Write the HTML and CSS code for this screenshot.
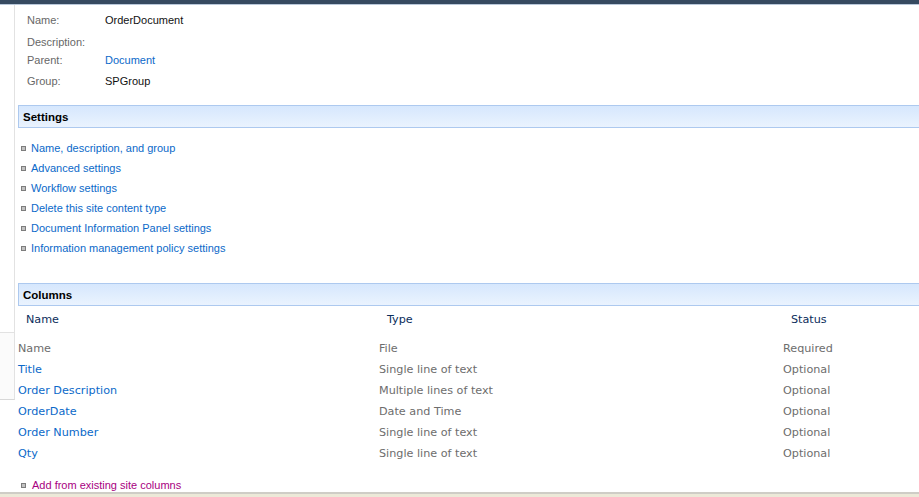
FILE: index.html
```html
<!DOCTYPE html>
<html>
<head>
<meta charset="utf-8">
<link rel="stylesheet" href="styles.css">
</head>
<body>
<div class="topbar"></div>
<div class="layout">
  <div class="leftnav">
    <div class="nav-top"></div>
    <div class="nav-bottom"></div>
  </div>
  <div class="main">
    <div class="info">
      <div class="info-row r1"><span class="lbl">Name:</span><span class="val">OrderDocument</span></div>
      <div class="info-row r2"><span class="lbl">Description:</span><span class="val"></span></div>
      <div class="info-row r3"><span class="lbl">Parent:</span><a class="val link">Document</a></div>
      <div class="info-row r4"><span class="lbl">Group:</span><span class="val">SPGroup</span></div>
    </div>

    <div class="section-head settings-head">Settings</div>
    <ul class="links">
      <li><span class="bullet"></span><a class="link">Name, description, and group</a></li>
      <li><span class="bullet"></span><a class="link">Advanced settings</a></li>
      <li><span class="bullet"></span><a class="link">Workflow settings</a></li>
      <li><span class="bullet"></span><a class="link">Delete this site content type</a></li>
      <li><span class="bullet"></span><a class="link">Document Information Panel settings</a></li>
      <li><span class="bullet"></span><a class="link">Information management policy settings</a></li>
    </ul>

    <div class="section-head columns-head">Columns</div>
    <div class="cols">
      <div class="col-row head"><span>Name</span><span>Type</span><span>Status</span></div>
      <div class="col-row first"><span class="plain">Name</span><span>File</span><span>Required</span></div>
      <div class="col-row"><a class="clink">Title</a><span>Single line of text</span><span>Optional</span></div>
      <div class="col-row"><a class="clink">Order Description</a><span>Multiple lines of text</span><span>Optional</span></div>
      <div class="col-row"><a class="clink">OrderDate</a><span>Date and Time</span><span>Optional</span></div>
      <div class="col-row"><a class="clink">Order Number</a><span>Single line of text</span><span>Optional</span></div>
      <div class="col-row"><a class="clink">Qty</a><span>Single line of text</span><span>Optional</span></div>
    </div>
    <div class="add-row"><span class="bullet"></span><a class="visited">Add from existing site columns</a></div>
  </div>
</div>
<div class="statusbar"></div>
</body>
</html>
```

FILE: styles.css
```css
html, body {
  margin: 0;
  padding: 0;
  background: #ffffff;
  overflow: hidden;
  height: 497px;
}
body {
  font-family: "Liberation Sans", Arial, sans-serif;
  font-size: 11px;
  color: #000;
}
.topbar {
  height: 4px;
  background: #364a60;
  border-bottom: 1px solid #b9c8da;
}
.layout {
  display: flex;
}
.leftnav {
  width: 15px;
  flex: 0 0 15px;
  display: flex;
  flex-direction: column;
}
.nav-top {
  height: 327px;
  border-right: 1px solid #e2e2e2;
  border-bottom: 1px solid #e2e2e2;
}
.nav-bottom {
  height: 66px;
  border-right: 1px solid #e2e2e2;
  border-bottom: 1px solid #d8d8d8;
  background: #fbfbfb;
}
.main {
  flex: 1;
  padding-left: 3px;
}
.info {
  padding-top: 6px;
  padding-left: 9px;
  height: 100px;
  box-sizing: border-box;
}
.info-row {
  display: flex;
  height: 18px;
  line-height: 18px;
}
.r2 { margin-top: 4px; }
.r4 { margin-top: 3px; }
.lbl {
  width: 78px;
  color: #676767;
}
.val { color: #111; }
.link {
  color: #0b69c9;
  text-decoration: none;
}
.section-head {
  height: 21px;
  line-height: 23px;
  border: 1px solid #adc9ef;
  border-right: none;
  background: linear-gradient(#d6e7fd, #eaf3fe);
  font-weight: bold;
  font-size: 11.5px;
  padding-left: 4px;
  color: #000;
}
.links {
  list-style: none;
  margin: 0;
  padding: 10px 0 0 0;
  height: 155px;
  box-sizing: border-box;
}
.links li {
  display: flex;
  align-items: center;
  height: 20px;
  padding-left: 3px;
}
.bullet {
  display: inline-block;
  width: 3px;
  height: 3px;
  border: 1px solid #7d7d7d;
  background: #c2c2c2;
  margin-right: 5px;
}
.cols {
  font-family: "DejaVu Sans", Verdana, sans-serif;
  font-size: 11.2px;
  color: #6d6d6d;
}
.col-row {
  display: grid;
  grid-template-columns: 361px 404px 1fr;
  height: 21px;
  line-height: 21px;
}
.col-row.head {
  height: 20px;
  line-height: 20px;
  margin-top: 4px;
  color: #0b2d5b;
}
.col-row.head span { padding-left: 8px; }
.col-row.first { margin-top: 8px; }
.plain { color: #6d6d6d; }
.clink {
  color: #0b69c9;
  text-decoration: none;
}
.add-row {
  display: flex;
  align-items: center;
  height: 20px;
  margin-top: 11px;
  padding-left: 3px;
}
.add-row .bullet { margin-right: 6px; }
.visited {
  color: #a8007f;
  text-decoration: none;
}
.statusbar {
  position: fixed;
  left: 0;
  right: 0;
  bottom: 0;
  height: 3px;
  border-top: 2px solid #cfcdc6;
  background: #ece9d8;
}
```
